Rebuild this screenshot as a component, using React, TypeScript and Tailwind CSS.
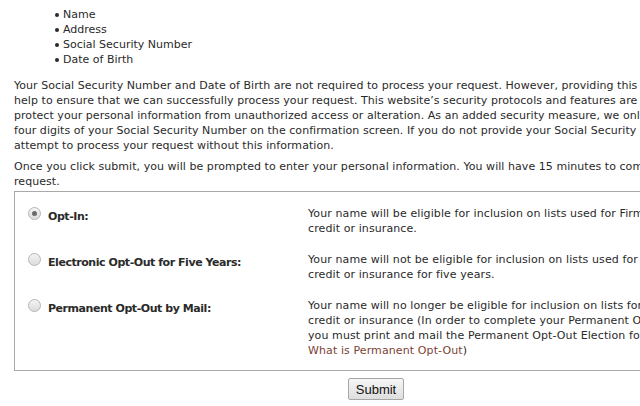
import React from "react";

const font = { fontFamily: '"DejaVu Sans", Verdana, sans-serif' };

function Radio({ checked }: { checked?: boolean }) {
  return (
    <span className="flex h-[13px] w-[13px] shrink-0 items-center justify-center rounded-full border border-[#b5b5b5] bg-gradient-to-b from-[#f4f4f4] to-[#dcdcdc]">
      {checked && <span className="h-[5px] w-[5px] rounded-full bg-[#6b6b6b]" />}
    </span>
  );
}

const options = [
  {
    label: "Opt-In:",
    checked: true,
    lines: [
      "Your name will be eligible for inclusion on lists used for Firm Offers of",
      "credit or insurance.",
    ],
  },
  {
    label: "Electronic Opt-Out for Five Years:",
    lines: [
      "Your name will not be eligible for inclusion on lists used for Firm Offers of",
      "credit or insurance for five years.",
    ],
  },
  {
    label: "Permanent Opt-Out by Mail:",
    lines: [
      "Your name will no longer be eligible for inclusion on lists for Firm Offers of",
      "credit or insurance (In order to complete your Permanent Opt-Out request,",
      "you must print and mail the Permanent Opt-Out Election form.",
    ],
    link: "What is Permanent Opt-Out",
  },
];

export default function App() {
  return (
    <div className="h-[406px] w-[640px] overflow-hidden bg-white text-[11px] leading-[15px] text-[#2a2a2a]" style={font}>
      <div className="w-[760px] pl-[14px]">
        <ul className="flex flex-col pl-[41px] pt-[7px]">
          {["Name", "Address", "Social Security Number", "Date of Birth"].map((t) => (
            <li key={t} className="flex items-center gap-[4px]">
              <span className="h-[4px] w-[4px] rounded-full bg-[#2a2a2a]" />
              {t}
            </li>
          ))}
        </ul>

        <p className="mt-[11px] whitespace-nowrap tracking-[0.05px]">
          Your Social Security Number and Date of Birth are not required to process your request. However, providing this information will
          <br />
          help to ensure that we can successfully process your request. This website’s security protocols and features are designed to
          <br />
          protect your personal information from unauthorized access or alteration. As an added security measure, we only display the last
          <br />
          four digits of your Social Security Number on the confirmation screen. If you do not provide your Social Security Number, we will
          <br />
          attempt to process your request without this information.
        </p>

        <p className="mt-[6px] whitespace-nowrap tracking-[0.05px]">
          Once you click submit, you will be prompted to enter your personal information. You will have 15 minutes to complete your
          <br />
          request.
        </p>

        <div className="mt-[2px] flex flex-col gap-[16px] border border-[#a9a9a9] pb-[12px] pt-[14px]">
          {options.map((o) => (
            <div key={o.label} className="flex">
              <div className="flex w-[293px] shrink-0 items-start gap-[7px] pl-[13px] pt-[1px]">
                <Radio checked={o.checked} />
                <span className="pt-[2px] font-bold tracking-[-0.45px]">{o.label}</span>
              </div>
              <div className="whitespace-nowrap tracking-[0.1px]">
                {o.lines.map((l) => (
                  <div key={l}>{l}</div>
                ))}
                {o.link && (
                  <div>
                    <a className="text-[#7d3f35]">{o.link}</a>)
                  </div>
                )}
              </div>
            </div>
          ))}
        </div>

        <div className="flex pl-[334px] pt-[7px]">
          <button
            type="button"
            className="h-[22px] w-[56px] rounded-[2px] border border-[#a7a7a7] bg-gradient-to-b from-[#f6f6f6] to-[#dedede] text-[13px] text-[#111]"
            style={{ fontFamily: '"Liberation Sans", Arial, sans-serif' }}
          >
            Submit
          </button>
        </div>
      </div>
    </div>
  );
}
